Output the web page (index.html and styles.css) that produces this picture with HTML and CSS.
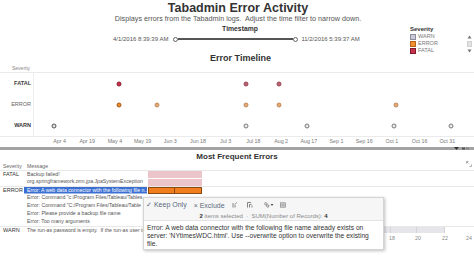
FILE: index.html
```html
<!DOCTYPE html>
<html>
<head>
<meta charset="utf-8">
<link rel="stylesheet" href="styles.css">
</head>
<body>
<div class="page">
  <header class="top">
    <div></div>
    <div class="center">
      <h1 class="title">Tabadmin Error Activity</h1>
      <p class="subtitle">Displays errors from the Tabadmin logs.&nbsp; Adjust the time filter to narrow down.</p>
      <div class="filter-label">Timestamp</div>
      <div class="slider">
        <span class="slider-val">4/1/2016 8:39:39 AM</span>
        <span class="knob"></span><span class="track"></span><span class="knob"></span>
        <span class="slider-val end">11/2/2016 5:39:37 AM</span>
      </div>
    </div>
    <div class="side">
      <div class="legend">
        <div class="legend-title">Severity</div>
        <div class="legend-item"><span class="sw sw-warn"></span>WARN</div>
        <div class="legend-item"><span class="sw sw-error"></span>ERROR</div>
        <div class="legend-item"><span class="sw sw-fatal"></span>FATAL</div>
      </div>
      <div class="scroller">
        <svg width="5" height="4" viewBox="0 0 5 4"><path d="M2.5 0.5 L4.5 3.5 L0.5 3.5Z" fill="#777"/></svg>
        <span class="thumb"></span>
        <svg width="5" height="4" viewBox="0 0 5 4"><path d="M0.5 0.5 L4.5 0.5 L2.5 3.5Z" fill="#777"/></svg>
      </div>
    </div>
  </header>

  <section class="timeline">
    <h2 class="sec-title tl-title">Error Timeline</h2>
    <div class="tl-head">Severity</div>
    <div class="tl-plot">
      <div class="tl-row">
        <div class="tl-label">FATAL</div>
        <div class="tl-area">
          <span class="dot fatal" style="left:85px"></span>
          <span class="dot fatal dim" style="left:212px"></span>
          <span class="dot fatal dim" style="left:245px"></span>
        </div>
      </div>
      <div class="tl-row">
        <div class="tl-label light">ERROR</div>
        <div class="tl-area">
          <span class="dot error" style="left:85px"></span>
          <span class="dot error dim" style="left:123px"></span>
          <span class="dot error dim" style="left:212px"></span>
          <span class="dot error dim" style="left:245px"></span>
          <span class="dot error dim" style="left:362px"></span>
        </div>
      </div>
      <div class="tl-row">
        <div class="tl-label">WARN</div>
        <div class="tl-area">
          <span class="dot warn" style="left:20px"></span>
          <span class="dot warn dim" style="left:212px"></span>
          <span class="dot warn dim" style="left:273px"></span>
          <span class="dot warn dim" style="left:360px"></span>
          <span class="dot warn dim" style="left:417px"></span>
        </div>
      </div>
    </div>
    <div class="tl-axis">
      <span class="tick" style="left:59.5px">Apr 4</span>
      <span class="tick" style="left:87.2px">Apr 19</span>
      <span class="tick" style="left:114.9px">May 4</span>
      <span class="tick" style="left:142.6px">May 19</span>
      <span class="tick" style="left:170.3px">Jun 3</span>
      <span class="tick" style="left:198px">Jun 18</span>
      <span class="tick" style="left:225.7px">Jul 3</span>
      <span class="tick" style="left:253.4px">Jul 18</span>
      <span class="tick" style="left:281.1px">Aug 2</span>
      <span class="tick" style="left:308.8px">Aug 17</span>
      <span class="tick" style="left:336.5px">Sep 1</span>
      <span class="tick" style="left:364.2px">Sep 16</span>
      <span class="tick" style="left:391.9px">Oct 1</span>
      <span class="tick" style="left:419.6px">Oct 16</span>
      <span class="tick" style="left:447.3px">Oct 31</span>
    </div>
  </section>

  <div class="divider">
    <span class="div-icons">
      <svg width="5" height="3" viewBox="0 0 5 3"><path d="M0 0 L5 0 L2.5 3Z" fill="#333"/></svg>
      <svg width="7" height="3" viewBox="0 0 7 3"><rect x="0" y="0.5" width="3" height="2" fill="#555"/><rect x="4" y="0.5" width="3" height="2" fill="#888"/></svg>
    </span>
  </div>

  <section class="errors">
    <div class="err-head">
      <div></div>
      <h2 class="sec-title err-title">Most Frequent Errors</h2>
      <div class="expand">
        <svg width="6" height="6" viewBox="0 0 6 6"><path d="M0.5 2.5 V0.5 H2.5 M3.5 5.5 H5.5 V3.5 M0.5 0.5 L2.5 2.5" stroke="#999" stroke-width="0.8" fill="none"/></svg>
      </div>
    </div>
    <div class="tbl">
      <div class="row head"><div class="sev">Severity</div><div class="msg">Message</div><div class="bar-cell"></div></div>

      <div class="row first"><div class="sev">FATAL</div><div class="msg">Backup failed!</div><div class="bar-cell"><span class="bar pink" style="width:54px"></span></div></div>
      <div class="row"><div class="sev"></div><div class="msg">org.springframework.orm.jpa.JpaSystemException</div><div class="bar-cell"><span class="bar pink" style="width:54px"></span></div></div>

      <div class="row first"><div class="sev">ERROR</div><div class="msg sel">Error: A web data connector with the following file n...</div><div class="bar-cell"><span class="bar orange"><span class="seg" style="width:27px"></span><span class="seg" style="width:27px"></span></span></div></div>
      <div class="row"><div class="sev"></div><div class="msg">Error: Command "c:/Program Files/Tableau/Tables</div><div class="bar-cell"></div></div>
      <div class="row"><div class="sev"></div><div class="msg">Error: Command "C:/Program Files/Tableau/Table</div><div class="bar-cell"></div></div>
      <div class="row"><div class="sev"></div><div class="msg">Error: Please provide a backup file name</div><div class="bar-cell"></div></div>
      <div class="row"><div class="sev"></div><div class="msg">Error: Too many arguments</div><div class="bar-cell"></div></div>

      <div class="row first"><div class="sev">WARN</div><div class="msg">The run-as password is empty.&nbsp; If the run-as user is</div><div class="bar-cell"><span class="bar gray"><span class="seg" style="width:243px"></span><span class="seg" style="width:26px"></span><span class="seg" style="width:28px"></span></span></div></div>
    </div>
    <div class="bar-axis">
      <span class="tick" style="left:392px">18</span>
      <span class="tick" style="left:418px">20</span>
      <span class="tick" style="left:445px">22</span>
      <span class="tick" style="left:469px">24</span>
    </div>
  </section>

  <div class="tooltip">
    <div class="tt-head">
      <div class="tt-actions">
        <span class="act">&#10003; Keep Only</span>
        <span class="act">&#215; Exclude</span>
        <svg class="ico" width="6" height="6" viewBox="0 0 6 6"><path d="M1 1 V5.5 M3 2.5 V5.5 M4.5 0.5 L3.5 2" stroke="#777" stroke-width="0.9" fill="none"/></svg>
        <svg class="ico ico2" width="6" height="6" viewBox="0 0 6 6"><path d="M0.5 0.5 H4 M0.5 0.5 V5.5 M2.5 2.5 H4.5 M2.5 2.5 V5.5 M5 3.5 V5.5" stroke="#777" stroke-width="0.9" fill="none"/></svg>
        <svg class="ico ico3" width="10" height="6" viewBox="0 0 10 6"><circle cx="1.8" cy="1.8" r="1.2" fill="none" stroke="#777" stroke-width="0.8"/><circle cx="3.8" cy="4" r="1.2" fill="none" stroke="#777" stroke-width="0.8"/><path d="M6.5 2 L9.5 2 L8 4Z" fill="#555"/></svg>
        <svg class="ico ico4" width="6" height="6" viewBox="0 0 6 6"><rect x="0.5" y="0.8" width="5" height="4.4" fill="none" stroke="#888" stroke-width="0.7"/><path d="M0.5 2.3 H5.5 M0.5 3.7 H5.5 M2.2 0.8 V5.2 M3.8 0.8 V5.2" stroke="#888" stroke-width="0.5"/></svg>
      </div>
      <div class="tt-summary"><b>2</b> items selected &nbsp;&middot;&nbsp; SUM(Number of Records): <b>4</b></div>
    </div>
    <div class="tt-body">Error: A web data connector with the following file name already exists on<br>server: 'NYtimesWDC.html'. Use --overwrite option to overwrite the existing<br>file.</div>
  </div>
</div>
</body>
</html>
```

FILE: styles.css
```css
html, body {
  margin: 0;
  padding: 0;
  background: #fff;
}
body {
  font-family: "Liberation Sans", Arial, sans-serif;
  color: #333;
}
.page {
  position: relative;
  width: 474px;
  height: 257px;
  overflow: hidden;
}

/* ---------- header ---------- */
.top {
  display: grid;
  grid-template-columns: 113px 250px 1fr;
  height: 53px;
}
.center {
  display: flex;
  flex-direction: column;
  align-items: center;
}
.title {
  margin: 2px 0 0;
  font-size: 12.5px;
  line-height: 13px;
  font-weight: 700;
  color: #333;
  white-space: nowrap;
}
.subtitle {
  margin: 0;
  font-size: 7.2px;
  line-height: 8px;
  color: #555;
  white-space: nowrap;
}
.filter-label {
  margin-top: 2px;
  padding-left: 4px;
  font-size: 6.8px;
  line-height: 8px;
  font-weight: 700;
  color: #333;
}
.slider {
  align-self: flex-start;
  display: flex;
  align-items: center;
  height: 10px;
  margin-top: 1px;
  font-size: 6px;
  color: #555;
  white-space: nowrap;
}
.slider-val { margin-right: 5px; }
.slider-val.end { margin: 0 0 0 3px; }
.knob {
  width: 3px;
  height: 3px;
  border: 1px solid #666;
  border-radius: 50%;
  background: #fff;
}
.track {
  width: 115px;
  height: 2px;
  background: #555;
}

.side {
  display: flex;
  justify-content: space-between;
  padding: 25px 2px 0 47px;
}
.legend-title {
  font-size: 6px;
  line-height: 8px;
  font-weight: 700;
  color: #333;
}
.legend-item {
  display: flex;
  align-items: center;
  font-size: 5.5px;
  line-height: 7px;
  color: #777;
}
.sw {
  width: 4px;
  height: 4px;
  margin-right: 2px;
  border: 1px solid;
}
.sw-warn { background: #c9c9d8; border-color: #8c8c9c; }
.sw-error { background: #f28e2b; border-color: #b5651d; }
.sw-fatal { background: #c8304c; border-color: #7d1a2c; }

.scroller {
  display: flex;
  flex-direction: column;
  align-items: center;
  gap: 2px;
  margin-top: 10px;
}
.thumb {
  width: 5px;
  height: 6px;
  background: #e2e2e2;
  border: 1px solid #d0d0d0;
  box-sizing: border-box;
}

/* ---------- timeline ---------- */
.sec-title {
  margin: 0;
  font-weight: 700;
  color: #333;
  text-align: center;
  white-space: nowrap;
}
.tl-title {
  font-size: 9px;
  line-height: 10px;
  padding-left: 7px;
}
.tl-head {
  margin-top: 2px;
  height: 7px;
  padding-left: 12px;
  font-size: 5px;
  line-height: 7px;
  color: #888;
}
.tl-plot {
  border-top: 1px solid #ebebeb;
  border-bottom: 1px solid #ebebeb;
}
.tl-row {
  display: flex;
  height: 21px;
}
.tl-label {
  width: 31px;
  padding-right: 2px;
  border-right: 1px solid #eeeeee;
  text-align: right;
  font-size: 5.5px;
  line-height: 21px;
  font-weight: 700;
  color: #3a3a3a;
}
.tl-label.light {
  font-weight: 400;
  color: #666;
}
.tl-area {
  position: relative;
  flex: 1;
}
.dot {
  position: absolute;
  top: 50%;
  width: 3px;
  height: 3px;
  border: 1px solid;
  border-radius: 50%;
  transform: translate(-50%, -50%);
}
.dot.fatal { background: #c8304c; border-color: #8a1c32; }
.dot.fatal.dim { background: #b86272; border-color: #9a4656; }
.dot.error { background: #f08a24; border-color: #a25c1a; }
.dot.error.dim { background: #e3aa78; border-color: #c08a5a; }
.dot.warn { background: #e4e4e4; border-color: #555; }
.dot.warn.dim { background: #eaeaea; border-color: #7a7a7a; }

.tl-axis {
  position: relative;
  height: 9px;
}
.tick {
  position: absolute;
  top: 0;
  transform: translateX(-50%);
  font-size: 5.3px;
  line-height: 9px;
  color: #777;
  white-space: nowrap;
}

.divider {
  position: relative;
  margin-top: 1px;
  height: 3px;
  background: #a3a3a3;
}
.div-icons {
  position: absolute;
  right: 5px;
  top: 0;
  display: flex;
  gap: 3px;
}

/* ---------- most frequent errors ---------- */
.err-head {
  display: grid;
  grid-template-columns: 1fr auto 1fr;
  margin-top: 1px;
  height: 12px;
}
.err-title {
  font-size: 8px;
  line-height: 12px;
}
.expand {
  justify-self: end;
  padding: 2px 2px 0 0;
}
.tbl {
  display: flex;
  flex-direction: column;
}
.row {
  display: flex;
  height: 8px;
  box-sizing: border-box;
  font-size: 5.2px;
  line-height: 7.5px;
  color: #555;
  white-space: nowrap;
}
.row.head {
  height: 7px;
  line-height: 7px;
  color: #666;
}
.row.first {
  border-top: 1px solid #e8e8e8;
  line-height: 7px;
}
.sev {
  width: 23px;
  padding-left: 1px;
  font-size: 5.5px;
  color: #333;
}
.row.head .sev { font-size: 5.2px; color: #666; padding-left: 3px; width: 21px; }
.row.first .sev { padding-left: 3px; width: 21px; }
.msg {
  width: 121px;
  padding-left: 3px;
  overflow: hidden;
}
.msg.sel {
  color: #fff;
  background: linear-gradient(#3b70d2, #3b70d2) 0 0 / 123px 6.5px no-repeat;
}
.bar-cell {
  flex: 1;
  display: flex;
  padding-top: 1px;
}
.row.first .bar-cell { padding-top: 0; }
.bar {
  display: flex;
  height: 100%;
}
.bar.pink { background: #ebc5c9; }
.bar.orange .seg {
  height: 100%;
  background: #f07e1e;
  border: 1px solid #8c4a12;
  box-sizing: border-box;
}
.bar.orange .seg + .seg { border-left: 0; }
.bar.gray .seg {
  height: 85%;
  background: #e6e6ea;
  border-right: 1px solid #d2d2d8;
  box-sizing: border-box;
}
.bar-axis {
  position: relative;
  height: 8px;
}
.bar-axis .tick {
  line-height: 8px;
  color: #888;
}

/* ---------- tooltip ---------- */
.tooltip {
  position: absolute;
  left: 143px;
  top: 197px;
  width: 241px;
  height: 53px;
  box-sizing: border-box;
  background: #fff;
  border: 1px solid #d4d4d4;
  box-shadow: 1px 1px 3px rgba(0, 0, 0, 0.25);
}
.tt-head {
  height: 23px;
  background: #f6f6f6;
  border-bottom: 1px solid #e3e3e3;
  box-sizing: border-box;
}
.tt-actions {
  display: flex;
  align-items: center;
  height: 14px;
  padding-left: 2px;
  font-size: 7px;
  color: #5a6a80;
  white-space: nowrap;
}
.act + .act { margin-left: 7px; }
.ico { margin-left: 7px; }
.ico2 { margin-left: 9px; }
.ico3 { margin-left: 11px; }
.ico4 { margin-left: 6px; }
.tt-summary {
  text-align: center;
  font-size: 6px;
  line-height: 8px;
  color: #8a8a8a;
  white-space: nowrap;
}
.tt-summary b {
  color: #333;
}
.tt-body {
  padding: 3px 1px 0 3px;
  font-size: 6.7px;
  line-height: 8px;
  color: #333;
  white-space: nowrap;
}
```
